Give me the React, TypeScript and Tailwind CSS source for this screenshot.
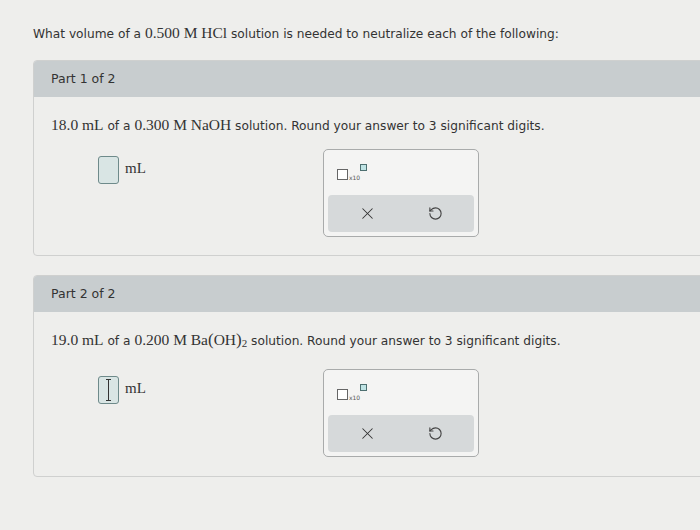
import { RotateCcw, X } from "lucide-react";

const sans = { fontFamily: '"DejaVu Sans", Verdana, sans-serif' };
const serif = { fontFamily: '"Liberation Serif", "Times New Roman", serif' };

function M({ children }: { children: React.ReactNode }) {
  return (
    <span style={serif} className="text-[15.5px]">
      {children}
    </span>
  );
}

function AnswerInput({ cursor }: { cursor?: boolean }) {
  return (
    <div className="flex items-center gap-[6px]">
      <div className="w-[21px] h-[28px] rounded-[3px] border border-[#6e8a8a] bg-[#d9e5e4] flex items-center justify-center">
        {cursor && (
          <div className="flex flex-col items-center h-[22px]">
            <div className="w-[5px] h-px bg-[#333]" />
            <div className="w-px flex-1 bg-[#333]" />
            <div className="w-[5px] h-px bg-[#333]" />
          </div>
        )}
      </div>
      <span style={serif} className="text-[15px] text-[#333] -mt-[4px]">
        mL
      </span>
    </div>
  );
}

function ToolBox() {
  return (
    <div className="w-[156px] h-[88px] rounded-[5px] border border-[#a9abab] bg-[#f4f4f3] p-[4px] flex flex-col">
      <div className="flex items-end h-[41px] pl-[9px] pb-[15px]">
        <div className="w-[11px] h-[11px] border border-[#666] bg-white" />
        <span style={sans} className="text-[6px] text-[#555] leading-none ml-px mb-[-1px]">
          x10
        </span>
        <div className="w-[7px] h-[7px] border border-[#4d6f70] bg-[#bfe3e4] mb-[9px]" />
      </div>
      <div className="flex-1 rounded-[4px] bg-[#d6d9da] flex items-center">
        <div className="w-1/2 flex justify-center pl-[6px]">
          <X size={19} strokeWidth={1.3} className="text-[#333]" />
        </div>
        <div className="w-1/2 flex justify-center pr-[4px]">
          <RotateCcw size={15} strokeWidth={1.8} className="text-[#444]" />
        </div>
      </div>
    </div>
  );
}

function Part({
  label,
  children,
  cursor,
}: {
  label: string;
  children: React.ReactNode;
  cursor?: boolean;
}) {
  return (
    <div className="w-[700px] rounded-[4px] border border-[#cfd0cf] overflow-hidden">
      <div className="h-[36px] bg-[#c8cdcf] pl-[17px] flex items-center">
        <span style={sans} className="text-[12.5px] text-[#333]">
          {label}
        </span>
      </div>
      <div className={cursor ? "pt-[18px] pb-[19px] pl-[17px]" : "pt-[18px] pb-[18px] pl-[17px]"}>
        <div style={sans} className="text-[12.2px] text-[#333] leading-[20px]">
          {children}
        </div>
        <div className={cursor ? "flex mt-[18px]" : "flex mt-[13px]"}>
          <div className="w-[272px] pl-[47px] pt-[7px]">
            <AnswerInput cursor={cursor} />
          </div>
          <ToolBox />
        </div>
      </div>
    </div>
  );
}

export default function App() {
  return (
    <div className="w-[700px] h-[530px] bg-[#eeeeec] overflow-hidden pl-[33px] pt-[23px]">
      <div style={sans} className="text-[12.2px] text-[#333] leading-[20px]">
        What volume of a <M>0.500 M HCl</M> solution is needed to neutralize each of the following:
      </div>
      <div className="mt-[16px]">
        <Part label="Part 1 of 2">
          <M>18.0 mL</M> of a <M>0.300 M NaOH</M> solution. Round your answer to 3 significant digits.
        </Part>
      </div>
      <div className="mt-[19px]">
        <Part label="Part 2 of 2" cursor>
          <M>19.0 mL</M> of a <M>0.200 M Ba</M>
          <M>
            <span className="text-[17px]">(</span>OH<span className="text-[17px]">)</span>
            <sub className="text-[11px] relative top-[2px]">2</sub>
          </M>{" "}
          solution. Round your answer to 3 significant digits.
        </Part>
      </div>
    </div>
  );
}
